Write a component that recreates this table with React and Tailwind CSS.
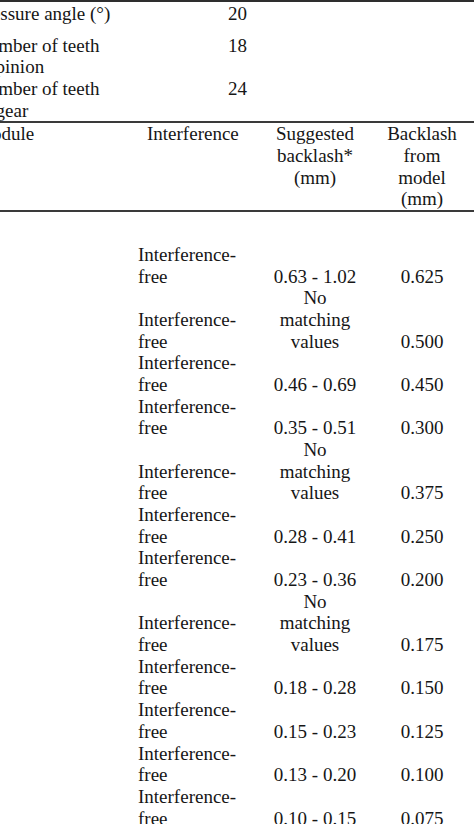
export default function App() {
  const font = { fontFamily: '"Liberation Serif", "Times New Roman", serif' };
  const rows = [
    { s: ["0.63 - 1.02"], b: "0.625" },
    { s: ["No", "matching", "values"], b: "0.500" },
    { s: ["0.46 - 0.69"], b: "0.450" },
    { s: ["0.35 - 0.51"], b: "0.300" },
    { s: ["No", "matching", "values"], b: "0.375" },
    { s: ["0.28 - 0.41"], b: "0.250" },
    { s: ["0.23 - 0.36"], b: "0.200" },
    { s: ["No", "matching", "values"], b: "0.175" },
    { s: ["0.18 - 0.28"], b: "0.150" },
    { s: ["0.15 - 0.23"], b: "0.125" },
    { s: ["0.13 - 0.20"], b: "0.100" },
    { s: ["0.10 - 0.15"], b: "0.075" },
  ];
  return (
    <div className="w-[474px] h-[824px] overflow-hidden bg-white">
      <div
        className="-ml-[25px] w-[520px] text-[19px] leading-[21.67px] text-[#161616]"
        style={font}
      >
        <div className="h-[2px] bg-[#2e2e2e]" />
        {/* parameter rows */}
        <div className="grid grid-cols-[253px_1fr] pt-[1px] pb-[10px]">
          <div className="whitespace-nowrap">Pressure angle (°)</div>
          <div>20</div>
        </div>
        <div className="grid grid-cols-[253px_1fr]">
          <div className="whitespace-nowrap">
            Number of teeth
            <br />
            of pinion
          </div>
          <div>18</div>
        </div>
        <div className="grid grid-cols-[253px_1fr]">
          <div className="whitespace-nowrap">
            Number of teeth
            <br />
            of gear
          </div>
          <div>24</div>
        </div>
        <div className="h-[2px] bg-[#3a3a3a]" />
        {/* header */}
        <div className="grid grid-cols-[163px_132px_113px_78px] items-start">
          <div>Module</div>
          <div className="pl-[9px]">Interference</div>
          <div className="pr-[23px] text-center">
            Suggested
            <br />
            backlash*
            <br />
            (mm)
          </div>
          <div className="text-center">
            Backlash
            <br />
            from
            <br />
            model
            <br />
            (mm)
          </div>
        </div>
        <div className="h-[2px] bg-[#3a3a3a]" />
        {/* data */}
        <div className="pt-[32px] flex flex-col">
          {rows.map((r, i) => (
            <div
              key={i}
              className="grid grid-cols-[163px_132px_113px_78px] items-end"
            >
              <div />
              <div className="whitespace-nowrap">
                Interference-
                <br />
                free
              </div>
              <div className="pr-[23px] text-center whitespace-nowrap">
                {r.s.map((t, j) => (
                  <div key={j}>{t}</div>
                ))}
              </div>
              <div className="text-center">{r.b}</div>
            </div>
          ))}
        </div>
      </div>
    </div>
  );
}
